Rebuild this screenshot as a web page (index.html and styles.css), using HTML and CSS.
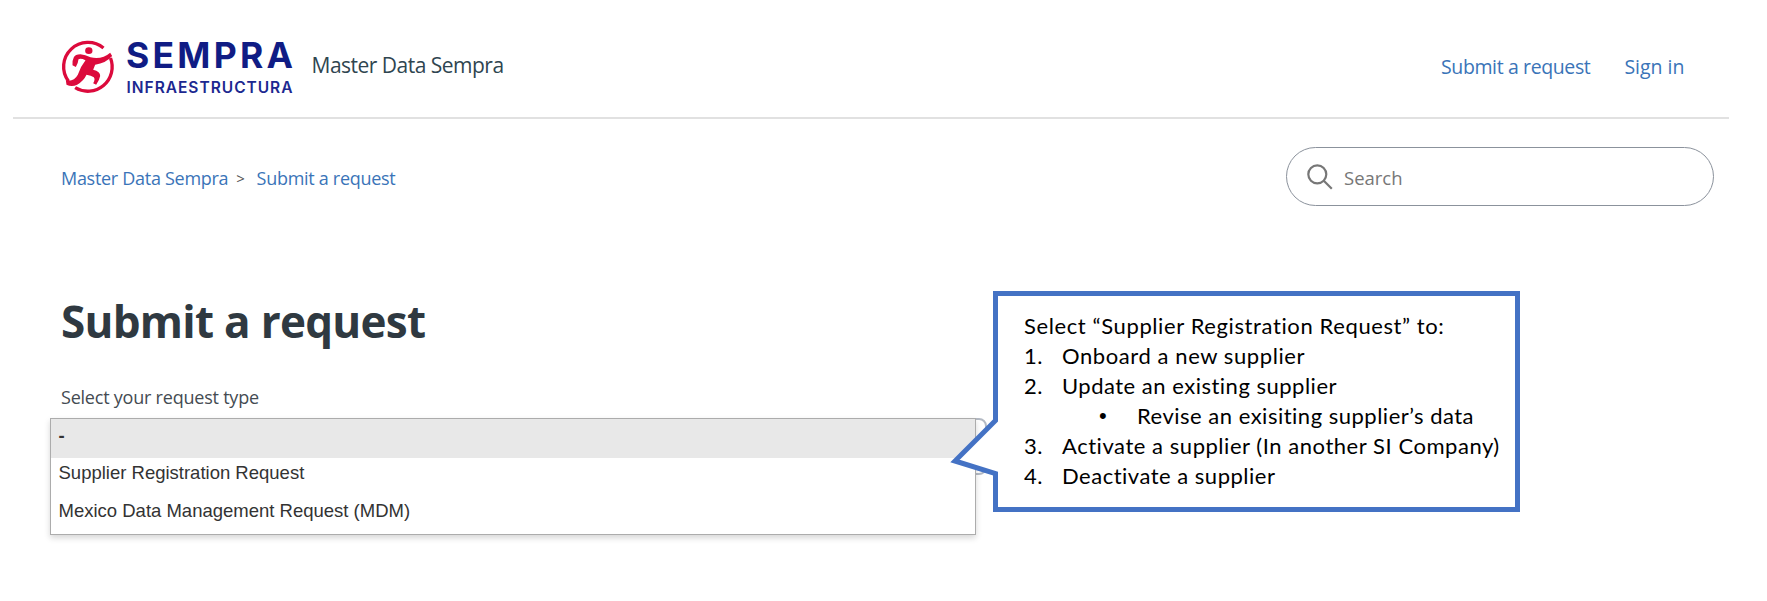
FILE: index.html
```html
<!DOCTYPE html>
<html lang="en">
<head>
<meta charset="utf-8">
<title>Submit a request</title>
<link rel="stylesheet" href="styles.css">
</head>
<body>
<header class="header">
  <a class="brand">
    <svg class="logo" width="240" height="70" viewBox="0 0 240 70">
      <g transform="translate(-5.500 2) scale(.3333)">
        <g fill="none" stroke="#dc0a3c" stroke-width="10">
          <path d="M42 148 A73 73 0 0 1 147 48"/>
          <path d="M168 78 A73 73 0 0 1 62 167"/>
        </g>
        <g fill="#dc0a3c">
          <ellipse cx="103" cy="56" rx="11" ry="10"/>
          <path d="M58 76 Q62 67 78 67 Q92 68 108 76 Q142 84 167 62 L173 72 Q154 94 122 98 L116 113 Q138 118 137 132 Q135 144 125 158 L116 154 Q123 142 118 136 Q110 130 96 128 Q88 146 68 158 Q52 166 36 158 L34 145 Q58 150 70 128 Q78 104 93 85 Q78 78 72 82 Q71 94 64 105 L54 100 Q52 88 58 76 Z"/>
        </g>
      </g>
      <text class="logo-name" x="66" y="37.500" textLength="167" lengthAdjust="spacing">SEMPRA</text>
      <text class="logo-sub" x="66.500" y="62.500" textLength="166" lengthAdjust="spacing">INFRAESTRUCTURA</text>
    </svg>
    <span class="brand-name">Master Data Sempra</span>
  </a>
  <nav class="nav"><a class="nav-request">Submit a request</a><a class="nav-sign">Sign in</a></nav>
</header>
<div class="subnav">
  <nav class="crumbs"><a class="crumb-home">Master Data Sempra</a><span class="crumb-sep">&gt;</span><a class="crumb-here">Submit a request</a></nav>
  <div class="search">
    <svg class="search-icon" width="28" height="28" viewBox="0 0 28 28" fill="none" stroke="#777" stroke-width="2.200"><circle cx="10.300" cy="10.300" r="9"/><path d="M16.800 16.800 L24.800 24.800"/></svg>
    <span class="search-text">Search</span>
  </div>
</div>
<main class="main">
  <h1 class="title">Submit a request</h1>
  <label class="label">Select your request type</label>
  <div class="select">
    <ul class="menu">
      <li class="option option-active">-</li>
      <li class="option">Supplier Registration Request</li>
      <li class="option">Mexico Data Management Request (MDM)</li>
    </ul>
  </div>
</main>
<aside class="callout">
  <svg class="callout-shape" width="580" height="230" viewBox="0 0 580 230"><path d="M50.500 8.500 H572.500 V224.500 H50.500 V188.500 L10 176 L50.500 135.500 Z" fill="#fff" stroke="#4472c4" stroke-width="5"/></svg>
  <div class="callout-body">
    <p class="line line-intro">Select “Supplier Registration Request” to:</p>
    <p class="line line-onboard"><span class="num">1.</span><span>Onboard a new supplier</span></p>
    <p class="line"><span class="num">2.</span><span>Update an existing supplier</span></p>
    <p class="line line-sub"><span class="dot">•</span><span>Revise an exisiting supplier’s data</span></p>
    <p class="line line-activate"><span class="num">3.</span><span>Activate a supplier (In another SI Company)</span></p>
    <p class="line"><span class="num">4.</span><span>Deactivate a supplier</span></p>
  </div>
</aside>
</body>
</html>
```
FILE: styles.css
```css
* { box-sizing: border-box; }
body {
  margin: 0;
  height: 601px;
  position: relative;
  overflow: hidden;
  background: #fff;
  color: #2f3941;
  font-family: "Open Sans", "Noto Sans", sans-serif;
}
a { color: #3a74b8; white-space: nowrap; }
.header {
  margin: 0 38px 0 13px;
  height: 119px;
  border-bottom: 2px solid #e1e1e1;
  display: flex;
  justify-content: space-between;
}
.brand { display: flex; padding: 30px 0 0 47px; }
.logo { overflow: visible; }
.logo-name { font: 700 35.500px Inter, sans-serif; fill: #101c84; }
.logo-sub { font: 600 15.500px Inter, sans-serif; fill: #1c2890; }
.brand-name { color: #2f4550; font-size: 21px; line-height: 30px; margin: 19.500px 0 0 11.500px; letter-spacing: -.51px; }
.nav { display: flex; padding: 52px 44.500px 0 0; font-size: 19.500px; line-height: 30px; gap: 34px; }
.nav-request { letter-spacing: -.38px; }
.subnav { display: flex; justify-content: space-between; padding: 27.500px 53px 0 61px; }
.crumbs { display: flex; font-size: 18px; line-height: 26px; padding-top: 18.500px; letter-spacing: -.29px; }
.crumb-sep { margin: 0 12px 0 8px; font-size: 15px; line-height: 27px; color: #555; }
.search {
  width: 428px;
  height: 59.500px;
  border: 1px solid #8b929c;
  border-radius: 30px;
  display: flex;
  padding: 16px 0 0 20px;
}
.search-text { color: #777; font-size: 18.500px; line-height: 26px; margin: 1.500px 0 0 9px; }
.main { padding: 84px 0 0 50px; }
.title { margin: 0 0 0 11px; font-size: 44px; line-height: 62px; font-weight: 700; letter-spacing: -.72px; }
.label { display: block; margin: 32px 0 0 11px; font-size: 18px; line-height: 26px; color: #444b52; height: 34px; letter-spacing: -.22px; }
.select { width: 937px; height: 57px; border: 2px solid #b4bac4; border-radius: 8px; }
.menu {
  list-style: none;
  margin: -2px 0 0 -2px;
  padding: 0;
  width: 926px;
  height: 117px;
  background: #fff;
  border: 1px solid #acacac;
  box-shadow: 0 3px 6px rgba(0, 0, 0, .16);
  font: 18.500px "Liberation Sans", Arial, sans-serif;
  color: #333;
}
.option { height: 38.500px; line-height: 29px; padding-left: 7.500px; }
.option-active { background: #e8e8e8; font-weight: 700; line-height: 34px; }
.callout { position: absolute; left: 945px; top: 285px; width: 580px; height: 230px; }
.callout-shape { position: absolute; left: 0; top: 0; }
.callout-body { position: relative; padding: 25.500px 0 0 79px; color: #000; font: 22px/30.100px Lato, sans-serif; letter-spacing: .5px; }
.line { margin: 0; display: flex; white-space: nowrap; height: 30.100px; }
.line-intro { letter-spacing: .61px; }
.line-onboard { letter-spacing: .58px; }
.line-activate { letter-spacing: .54px; }
.num { width: 38px; }
.line-sub { padding-left: 75px; }
.dot { width: 38px; font-family: "Liberation Sans", sans-serif; }
```
